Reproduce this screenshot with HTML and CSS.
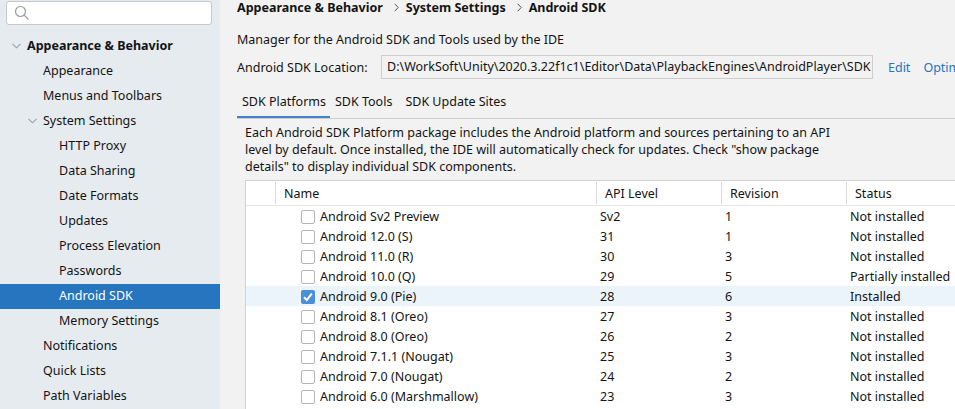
FILE: index.html
```html
<!DOCTYPE html>
<html lang="en">
<head>
<meta charset="utf-8">
<title>Android SDK</title>
<link rel="stylesheet" href="styles.css">
</head>
<body>
<div class="app">
  <aside class="side">
    <div class="search">
      <svg width="16" height="16" viewBox="0 0 16 16" fill="none" stroke="#9a9fa5" stroke-width="1.2"><circle cx="6.5" cy="6.5" r="5"/><path d="M10.2 10.2 14.5 14.5"/></svg>
    </div>
    <ul class="tree">
      <li class="node l0 bold"><svg class="chev" width="9" height="6" viewBox="0 0 9 6" fill="none" stroke="#9a9fa5" stroke-width="1.1"><path d="M.5.8 4.5 4.8 8.5.8"/></svg>Appearance &amp; Behavior</li>
      <li class="node l1">Appearance</li>
      <li class="node l1">Menus and Toolbars</li>
      <li class="node l1"><svg class="chev" width="9" height="6" viewBox="0 0 9 6" fill="none" stroke="#9a9fa5" stroke-width="1.1"><path d="M.5.8 4.5 4.8 8.5.8"/></svg>System Settings</li>
      <li class="node l2">HTTP Proxy</li>
      <li class="node l2">Data Sharing</li>
      <li class="node l2">Date Formats</li>
      <li class="node l2">Updates</li>
      <li class="node l2">Process Elevation</li>
      <li class="node l2">Passwords</li>
      <li class="node l2 sel">Android SDK</li>
      <li class="node l2">Memory Settings</li>
      <li class="node l1">Notifications</li>
      <li class="node l1">Quick Lists</li>
      <li class="node l1">Path Variables</li>
    </ul>
  </aside>
  <main class="main">
    <div class="crumbs">
      <span>Appearance &amp; Behavior</span>
      <svg width="5" height="9" viewBox="0 0 5 9" fill="none" stroke="#555" stroke-width="1"><path d="M.7.8 4.2 4.5.7 8.2"/></svg>
      <span>System Settings</span>
      <svg width="5" height="9" viewBox="0 0 5 9" fill="none" stroke="#555" stroke-width="1"><path d="M.7.8 4.2 4.5.7 8.2"/></svg>
      <span>Android SDK</span>
    </div>
    <p class="intro">Manager for the Android SDK and Tools used by the IDE</p>
    <div class="location">
      <span class="loc-label">Android SDK Location:</span>
      <div class="loc-input">D:\WorkSoft\Unity\2020.3.22f1c1\Editor\Data\PlaybackEngines\AndroidPlayer\SDK</div>
      <a class="link edit">Edit</a>
      <a class="link">Optimize disk space</a>
    </div>
    <div class="tabs">
      <span class="tab active">SDK Platforms</span>
      <span class="tab wide">SDK Tools</span>
      <span class="tab">SDK Update Sites</span>
    </div>
    <div class="panel">
      <p class="desc">Each Android SDK Platform package includes the Android platform and sources pertaining to an API<br>level by default. Once installed, the IDE will automatically check for updates. Check "show package<br>details" to display individual SDK components.</p>
      <div class="table">
        <div class="thead">
          <div class="th c0"></div>
          <div class="th c1">Name</div>
          <div class="th c2">API Level</div>
          <div class="th c3">Revision</div>
          <div class="th c4">Status</div>
        </div>
        <div class="row"><div class="name"><i class="cb"></i>Android Sv2 Preview</div><div class="api">Sv2</div><div class="rev">1</div><div class="status">Not installed</div></div>
        <div class="row"><div class="name"><i class="cb"></i>Android 12.0 (S)</div><div class="api">31</div><div class="rev">1</div><div class="status">Not installed</div></div>
        <div class="row"><div class="name"><i class="cb"></i>Android 11.0 (R)</div><div class="api">30</div><div class="rev">3</div><div class="status">Not installed</div></div>
        <div class="row"><div class="name"><i class="cb"></i>Android 10.0 (Q)</div><div class="api">29</div><div class="rev">5</div><div class="status">Partially installed</div></div>
        <div class="row hl"><div class="name"><i class="cb on"><svg width="14" height="14" viewBox="0 0 14 14" fill="none" stroke="#fff" stroke-width="2"><path d="M3 7.2 5.8 10 10.8 3.6"/></svg></i>Android 9.0 (Pie)</div><div class="api">28</div><div class="rev">6</div><div class="status">Installed</div></div>
        <div class="row"><div class="name"><i class="cb"></i>Android 8.1 (Oreo)</div><div class="api">27</div><div class="rev">3</div><div class="status">Not installed</div></div>
        <div class="row"><div class="name"><i class="cb"></i>Android 8.0 (Oreo)</div><div class="api">26</div><div class="rev">2</div><div class="status">Not installed</div></div>
        <div class="row"><div class="name"><i class="cb"></i>Android 7.1.1 (Nougat)</div><div class="api">25</div><div class="rev">3</div><div class="status">Not installed</div></div>
        <div class="row"><div class="name"><i class="cb"></i>Android 7.0 (Nougat)</div><div class="api">24</div><div class="rev">2</div><div class="status">Not installed</div></div>
        <div class="row"><div class="name"><i class="cb"></i>Android 6.0 (Marshmallow)</div><div class="api">23</div><div class="rev">3</div><div class="status">Not installed</div></div>
      </div>
    </div>
  </main>
</div>
</body>
</html>
```
FILE: styles.css
```css
* { box-sizing: border-box; }
html, body { margin: 0; height: 100%; overflow: hidden; }
body { font: 12.5px/17px "Noto Sans", "Noto Sans CJK SC", sans-serif; color: #141414; background: #f2f2f2; }
.app { display: flex; width: 955px; height: 409px; overflow: hidden; }

.side { flex: 0 0 220px; background: #e6ebf0; padding: 1px 8px 0 6px; }
.search { height: 24px; background: #fff; border: 1px solid #c6c9cc; border-radius: 3px; display: flex; align-items: center; padding-left: 7px; }
.tree { list-style: none; margin: 9px -8px 0 -6px; padding: 0; }
.node { height: 25px; line-height: 23px; padding-bottom: 3px; display: flex; align-items: center; white-space: nowrap; position: relative; }
.l0 { padding-left: 27px; }
.l1 { padding-left: 43px; }
.l2 { padding-left: 59px; }
.bold { font-weight: 700; }
.chev { position: absolute; top: 9px; }
.l0 .chev { left: 12px; }
.l1 .chev { left: 28px; }
.sel { background: #2675bf; color: #fff; }

.main { flex: 1; min-width: 0; padding: 0 0 0 17px; }
.crumbs { display: flex; align-items: center; height: 15px; font-weight: 700; white-space: nowrap; }
.crumbs svg { flex: none; margin: 0 7px 0 11px; }
.intro { margin: 16px 0 0; height: 17px; }
.location { display: flex; align-items: center; margin-top: 7px; height: 24px; white-space: nowrap; }
.loc-label { flex: 0 0 144px; }
.loc-input { flex: 0 0 492px; height: 24px; line-height: 22px; border: 1px solid #cdcdcd; padding-left: 5px; background: #f2f2f2; overflow: hidden; }
.link { color: #2675bf; flex: none; }
.edit { margin: 0 13px 0 15px; }

.tabs { display: flex; margin-top: 12px; height: 28px; border-bottom: 1px solid #cfcfcf; white-space: nowrap; }
.tab { height: 27px; line-height: 21px; padding: 0 5px; flex: none; }
.tab.active { border-bottom: 2px solid #4083c9; width: 93px; }
.tab.wide { padding-right: 8px; }

.panel { padding: 5px 0 0 8px; }
.desc { margin: 0; height: 51px; white-space: nowrap; }
.table { margin-top: 5px; background: #fff; border-top: 1px solid #d1d1d1; border-left: 1px solid #d1d1d1; height: 240px; width: 720px; }
.thead { display: flex; height: 25px; border-bottom: 1px solid #e6e6e6; }
.th { height: 22px; margin-top: 1px; line-height: 24px; border-right: 1px solid #d9d9d9; padding-left: 8px; flex: none; }
.c0 { width: 30px; }
.c1 { width: 321px; }
.c2 { width: 125px; }
.c3 { width: 125px; }
.c4 { width: 119px; border-right: 0; }
.row { display: flex; height: 20px; line-height: 22px; white-space: nowrap; }
.hl { background: #ebf3fb; }
.name { flex: 0 0 349px; padding-left: 55px; display: flex; align-items: flex-start; }
.api { flex: 0 0 125px; padding-left: 5px; }
.rev { flex: 0 0 125px; padding-left: 5px; }
.status { flex: 0 0 120px; padding-left: 5px; }
.cb { flex: none; width: 14px; height: 14px; margin: 4px 5px 0 0; background: #fff; border: 1px solid #b5b5b5; border-radius: 2px; display: block; }
.cb.on { background: #4a90d9; border: 0; }
.cb svg { display: block; }
```
